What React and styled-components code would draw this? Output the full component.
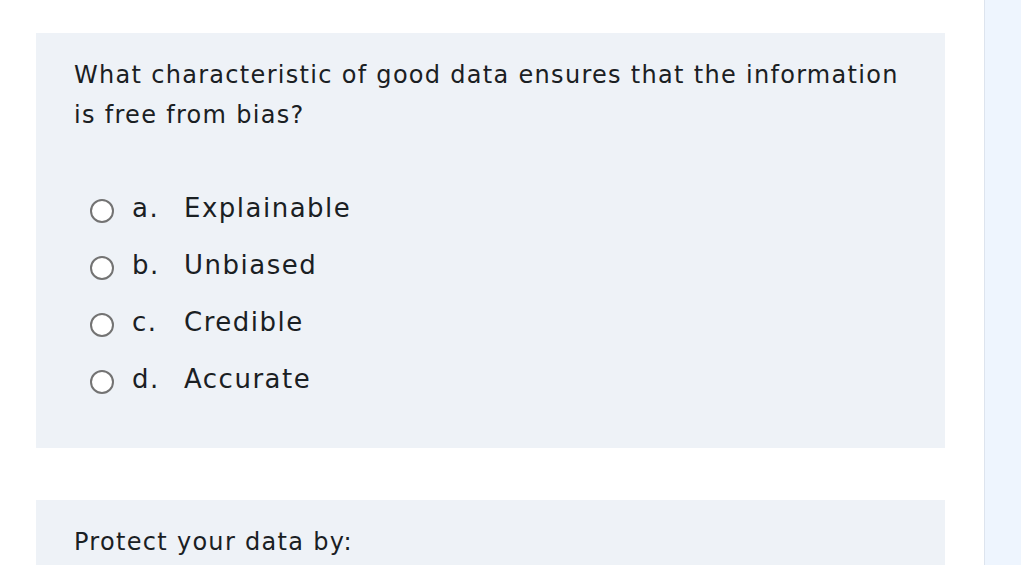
import React from 'react';
import styled, { createGlobalStyle } from 'styled-components';

const GlobalStyle = createGlobalStyle`
  html, body {
    margin: 0;
    padding: 0;
    background: #ffffff;
    font-family: "DejaVu Sans", "Noto Sans", sans-serif;
    color: #1a2023;
  }
`;

const Page = styled.div`
  display: flex;
  height: 565px;
  overflow: hidden;
`;

const Main = styled.main`
  flex: 1;
  padding: 33px 39px 0 36px;
  display: flex;
  flex-direction: column;
  gap: 52px;
`;

const Sidebar = styled.aside`
  width: 36px;
  flex-shrink: 0;
  background: #eef5fe;
  border-left: 1px solid #dde4ee;
`;

const Card = styled.section`
  background: #eef2f7;
  padding: 22px 38px 41px;
`;

const QuestionText = styled.p`
  margin: 0;
  font-size: 24px;
  line-height: 40px;
  letter-spacing: 1.3px;
  max-width: 845px;
`;

const OptionList = styled.div`
  display: flex;
  flex-direction: column;
  margin-top: 44px;
  padding-left: 16px;
`;

const Option = styled.label`
  display: flex;
  align-items: center;
  height: 57px;
  font-size: 26px;
  letter-spacing: 1.5px;
  cursor: pointer;
`;

const Radio = styled.span`
  width: 20px;
  height: 20px;
  border: 2px solid #737373;
  border-radius: 50%;
  background: #fff;
  flex-shrink: 0;
  margin-right: 18px;
  margin-top: 6px;
`;

const Letter = styled.span`
  width: 52px;
`;

const questions = [
  {
    id: 1,
    text: 'What characteristic of good data ensures that the information is free from bias?',
    options: ['Explainable', 'Unbiased', 'Credible', 'Accurate'],
  },
];

export default function App() {
  return (
    <>
      <GlobalStyle />
      <Page>
        <Main>
          {questions.map((q) => (
            <Card key={q.id}>
              <QuestionText>{q.text}</QuestionText>
              <OptionList>
                {q.options.map((opt, i) => (
                  <Option key={opt}>
                    <Radio />
                    <Letter>{String.fromCharCode(97 + i)}.</Letter>
                    {opt}
                  </Option>
                ))}
              </OptionList>
            </Card>
          ))}
          <Card>
            <QuestionText>Protect your data by:</QuestionText>
          </Card>
        </Main>
        <Sidebar />
      </Page>
    </>
  );
}
